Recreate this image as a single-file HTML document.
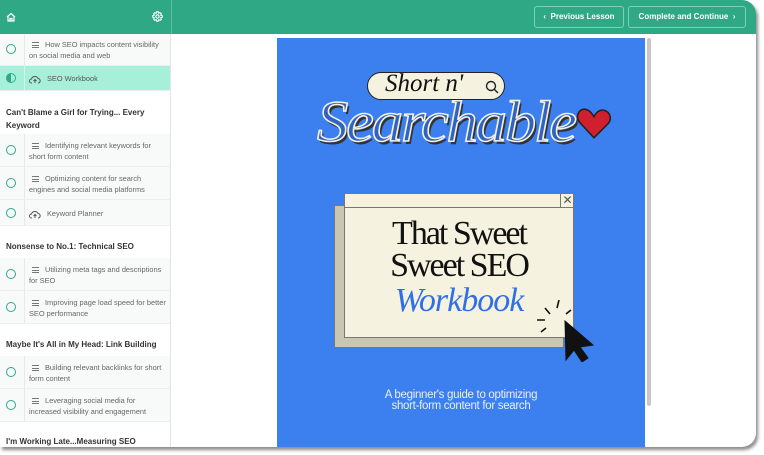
<!DOCTYPE html>
<html><head><meta charset="utf-8"><style>
*{margin:0;padding:0;box-sizing:border-box}
body{width:764px;height:455px;background:#fff;font-family:"Liberation Sans",sans-serif;position:relative;overflow:hidden}
.frame{position:absolute;left:0;top:0;width:756px;height:447px;border-radius:0 14px 14px 0;overflow:hidden;background:#fff;box-shadow:2px 3px 3px rgba(0,0,0,.45)}
.hdr{position:absolute;left:0;top:0;width:756px;height:34px;background:#2fa985}
.hdr .sep{position:absolute;left:171px;top:0;width:1px;height:34px;background:#5dbf9e}
.btn{position:absolute;top:6px;height:22px;border:1px solid #7fd0b3;border-radius:3px;color:#fff;font-size:8px;font-weight:bold;line-height:20px;text-align:center}
.side{position:absolute;left:0;top:34px;width:171px;height:413px;background:#fff;border-right:1px solid #e4e4e4}
.row{position:absolute;left:0;width:170px;background:#f8f9f9;border-bottom:1px solid #eee}
.row .c{position:absolute;left:6px;width:10px;height:10px;border:1.5px solid #2fa985;border-radius:50%}
.row .vl{position:absolute;left:24px;top:0;bottom:0;width:1px;background:#e8e8e8}
.row .t{position:absolute;left:29px;font-size:7.4px;color:#666;line-height:11px;width:139px}
.ic{display:inline-block;width:7px;height:6px;margin:0 6px 0 3px;border-top:1px solid #777;border-bottom:1px solid #777;position:relative;vertical-align:middle}
.ic:after{content:"";position:absolute;left:0;top:1.5px;width:7px;height:1px;background:#777}
.cl{display:inline-block;vertical-align:middle;margin-right:6px}
.sec{position:absolute;left:6px;font-size:8px;font-weight:bold;color:#333;line-height:13px;width:160px}
.doc{position:absolute;left:277px;top:38px;width:368px;height:409px;background:#3c80f0;overflow:hidden}
.sb{position:absolute;left:647px;top:38px;width:4px;height:368px;background:#c8c8c8;border-radius:2px}
</style></head><body>
<div class="frame">
<div class="hdr"><div class="sep"></div>
<svg style="position:absolute;left:6px;top:12px" width="10" height="10" viewBox="0 0 10 10" fill="none" stroke="#fff" stroke-width="1.2"><path d="M1 5L5 1.5L9 5M2 4.5V9H8V4.5M4 9V6.5H6V9"/></svg>
<svg style="position:absolute;left:152px;top:11px" width="11" height="11" viewBox="0 0 10 10" fill="none" stroke="#fff" stroke-width="1"><circle cx="5" cy="5" r="1.5"/><path d="M4.2 .7H5.8L6.1 2L7.3 1.4L8.5 2.6L7.9 3.8L9.3 4.2V5.8L7.9 6.2L8.5 7.4L7.4 8.5L6.2 7.9L5.8 9.3H4.2L3.8 7.9L2.6 8.5L1.5 7.4L2.1 6.2L.7 5.8V4.2L2.1 3.8L1.5 2.6L2.6 1.5L3.8 2.1Z"/></svg>
<div class="btn" style="left:534px;width:90px">‹&nbsp;&nbsp;Previous Lesson</div>
<div class="btn" style="left:628px;width:118px">Complete and Continue&nbsp;&nbsp;›</div>
</div>
<div class="side">
<div class="row" style="top:0;height:32px"><div class="c" style="top:10px"></div><div class="vl"></div><div class="t" style="top:5px"><span class="ic"></span>How SEO impacts content visibility on social media and web</div></div>
<div class="row" style="top:32px;height:25px;background:#a6f0da"><div class="c" style="top:7px;background:linear-gradient(90deg,#2fa985 50%,transparent 50%)"></div><div class="vl" style="background:#d4f7ec"></div><div class="t" style="top:7px;color:#555"><svg class="cl" width="12" height="9" viewBox="0 0 12 9" fill="none" stroke="#555" stroke-width="1"><path d="M3 8H2.5A2 2 0 0 1 2.5 4A3.5 3.5 0 0 1 9 3.5A2.3 2.3 0 0 1 9.5 8H9M6 8V4.5M4.5 6L6 4.5L7.5 6"/></svg>SEO Workbook</div></div>
<div class="sec" style="top:72px">Can't Blame a Girl for Trying... Every Keyword</div>
<div class="row" style="top:100px;height:33px"><div class="c" style="top:11px"></div><div class="vl"></div><div class="t" style="top:6px"><span class="ic"></span>Identifying relevant keywords for short form content</div></div>
<div class="row" style="top:133px;height:33px"><div class="c" style="top:11px"></div><div class="vl"></div><div class="t" style="top:6px"><span class="ic"></span>Optimizing content for search engines and social media platforms</div></div>
<div class="row" style="top:166px;height:26px"><div class="c" style="top:8px"></div><div class="vl"></div><div class="t" style="top:8px"><svg class="cl" width="12" height="9" viewBox="0 0 12 9" fill="none" stroke="#555" stroke-width="1"><path d="M3 8H2.5A2 2 0 0 1 2.5 4A3.5 3.5 0 0 1 9 3.5A2.3 2.3 0 0 1 9.5 8H9M6 8V4.5M4.5 6L6 4.5L7.5 6"/></svg>Keyword Planner</div></div>
<div class="sec" style="top:206px">Nonsense to No.1: Technical SEO</div>
<div class="row" style="top:224px;height:33px"><div class="c" style="top:11px"></div><div class="vl"></div><div class="t" style="top:6px"><span class="ic"></span>Utilizing meta tags and descriptions for SEO</div></div>
<div class="row" style="top:257px;height:33px"><div class="c" style="top:11px"></div><div class="vl"></div><div class="t" style="top:6px"><span class="ic"></span>Improving page load speed for better SEO performance</div></div>
<div class="sec" style="top:304px">Maybe It's All in My Head: Link Building</div>
<div class="row" style="top:322px;height:33px"><div class="c" style="top:11px"></div><div class="vl"></div><div class="t" style="top:6px"><span class="ic"></span>Building relevant backlinks for short form content</div></div>
<div class="row" style="top:355px;height:33px"><div class="c" style="top:11px"></div><div class="vl"></div><div class="t" style="top:6px"><span class="ic"></span>Leveraging social media for increased visibility and engagement</div></div>
<div class="sec" style="top:401px">I'm Working Late...Measuring SEO</div>
</div>
<div class="doc">
<div style="position:absolute;left:90px;top:34px;width:138px;height:28px;background:#f5f2e0;border:1.5px solid #222;border-radius:14px"></div>
<div style="position:absolute;left:108px;top:32px;font:italic 25px 'Liberation Serif',serif;color:#111">Short n'</div>
<svg style="position:absolute;left:208px;top:42px" width="14" height="14" viewBox="0 0 14 14" fill="none" stroke="#222" stroke-width="1.4"><circle cx="6" cy="6" r="4.5"/><path d="M9.5 9.5L13 13"/></svg>
<div style="position:absolute;left:40px;top:50px;font:italic 58px 'Liberation Serif',serif;color:#2f63c4;-webkit-text-stroke:1.5px #f5f2e0;text-shadow:2px 3px 0 #333;letter-spacing:-2px;transform:scaleX(1.08);transform-origin:left">Searchable</div>
<svg style="position:absolute;left:298px;top:66px" width="38" height="38" viewBox="0 0 36 36"><path d="M18 32L4 17C0 11 4 4 10 5C14 6 16 9 18 12C20 8 23 5 28 6C34 8 35 15 31 19Z" fill="#d0202e" stroke="#222" stroke-width="1.5"/></svg>
<div style="position:absolute;left:57px;top:167px;width:230px;height:143px;background:#c9c6b2;border:1px solid #777"></div>
<div style="position:absolute;left:67px;top:155px;width:230px;height:145px;background:#f5f2e0;border:1.5px solid #777"></div>
<div style="position:absolute;left:67px;top:155px;width:230px;height:15px;border-bottom:1.5px solid #777"></div>
<div style="position:absolute;left:283px;top:155px;width:14px;height:15px;border-left:1.5px solid #777;font-size:12px;line-height:14px;text-align:center;color:#555">✕</div>
<div style="position:absolute;left:67px;top:180px;width:230px;text-align:center;font:34px/32px 'Liberation Serif',serif;color:#111;letter-spacing:-2px">That Sweet<br>Sweet SEO</div>
<div style="position:absolute;left:67px;top:244px;width:230px;text-align:center;font:italic 34px 'Liberation Serif',serif;color:#2f6fe8;letter-spacing:-1px">Workbook</div>
<svg style="position:absolute;left:258px;top:262px" width="62" height="62" viewBox="0 0 62 62"><path d="M30 21L31 60L39 50L47 62L53 58L45 47L58 45Z" fill="#111" stroke="#111"/><path d="M2 20H10M6 32L11 28M10 8L15 14M24 0L22 8M36 10L31 14" stroke="#111" stroke-width="1.6"/></svg>
<div style="position:absolute;left:0;top:352px;width:368px;text-align:center;font:11.5px/11px 'Liberation Sans',sans-serif;color:#e8eefc;letter-spacing:-.3px">A beginner's guide to optimizing<br>short-form content for search</div>
</div>
<div class="sb"></div>
</div>
</body></html>
